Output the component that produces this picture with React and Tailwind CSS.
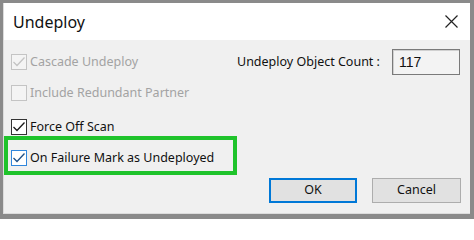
import React from "react";

const font = { fontFamily: "'Noto Sans', 'Open Sans', 'Liberation Sans', sans-serif" };

function Box({ checked, disabled, focus }) {
  const border = disabled ? "border-[#c4c4c4]" : focus ? "border-[#2f86dc]" : "border-[#333333]";
  const stroke = disabled ? "#c4c4c4" : focus ? "#1d4f86" : "#1a1a1a";
  return (
    <span className={"w-[16px] h-[16px] border flex items-center justify-center shrink-0 " + (disabled ? "bg-[#f4f4f4] " : "bg-white ") + border}>
      {checked && (
        <svg width="14" height="14" viewBox="0 0 14 14">
          <polyline points="1.5,7 5,10.5 12.5,2.5" fill="none" stroke={stroke} strokeWidth="1.3" />
        </svg>
      )}
    </span>
  );
}

function Check({ label, checked, disabled, focus, className }) {
  return (
    <div className={"flex items-center gap-[3px] h-[16px] " + (className || "")}>
      <Box checked={checked} disabled={disabled} focus={focus} />
      <span className={"text-[12.5px] leading-none whitespace-nowrap " + (disabled ? "text-[#a3a3a3]" : "text-[#111]")}>{label}</span>
    </div>
  );
}

export default function App() {
  return (
    <div className="w-[474px] h-[219px] bg-[#8a8a8a] pt-[3px] pl-[3px] pr-[4px] pb-[5px]" style={font}>
      <div className="w-full h-full flex flex-col border-l border-b border-[#dcdcdc]">
        <div className="h-[37px] bg-white flex items-center justify-between pl-[9px] pr-[12px] shrink-0">
          <span className="text-[16px] text-[#111]">Undeploy</span>
          <svg width="13" height="13" viewBox="0 0 13 13">
            <path d="M0.5 0.5 L12.5 12.5 M12.5 0.5 L0.5 12.5" stroke="#222" strokeWidth="1.2" />
          </svg>
        </div>
        <div className="flex-1 bg-[#f0f0f0] flex flex-col">
          <div className="flex justify-between">
            <div className="flex flex-col">
              <Check className="ml-[7px] mt-[14px]" label="Cascade Undeploy" checked disabled />
              <Check className="ml-[7px] mt-[15px]" label="Include Redundant Partner" disabled />
              <Check className="ml-[7px] mt-[18px]" label="Force Off Scan" checked />
              <div className="mt-[1px] w-[233px] h-[39px] border-[4px] border-[#1fc32b] pl-[3px] pt-[10px]">
                <Check label="On Failure Mark as Undeployed" checked focus />
              </div>
            </div>
            <div className="flex items-center gap-[12px] mt-[9px] mr-[12px] self-start">
              <span className="text-[12.5px] text-[#111] whitespace-nowrap">Undeploy Object Count :</span>
              <div className="w-[68px] h-[26px] border border-[#7a7a7a] shadow-[inset_1px_1px_0_#d0d0d0] bg-[#f3f3f3] flex items-center pl-[6px] text-[14px] text-[#111]" style={{ fontFamily: "'Liberation Sans', sans-serif" }}>
                117
              </div>
            </div>
          </div>
          <div className="mt-auto flex justify-end gap-[15px] pr-[9px] pb-[10px]">
            <button className="w-[88px] h-[25px] bg-[#e1e1e1] border-2 border-[#0078d7] text-[12.5px] text-[#111]">OK</button>
            <button className="w-[89px] h-[25px] bg-[#e1e1e1] border border-[#adadad] text-[12.5px] text-[#111]">Cancel</button>
          </div>
        </div>
      </div>
    </div>
  );
}
